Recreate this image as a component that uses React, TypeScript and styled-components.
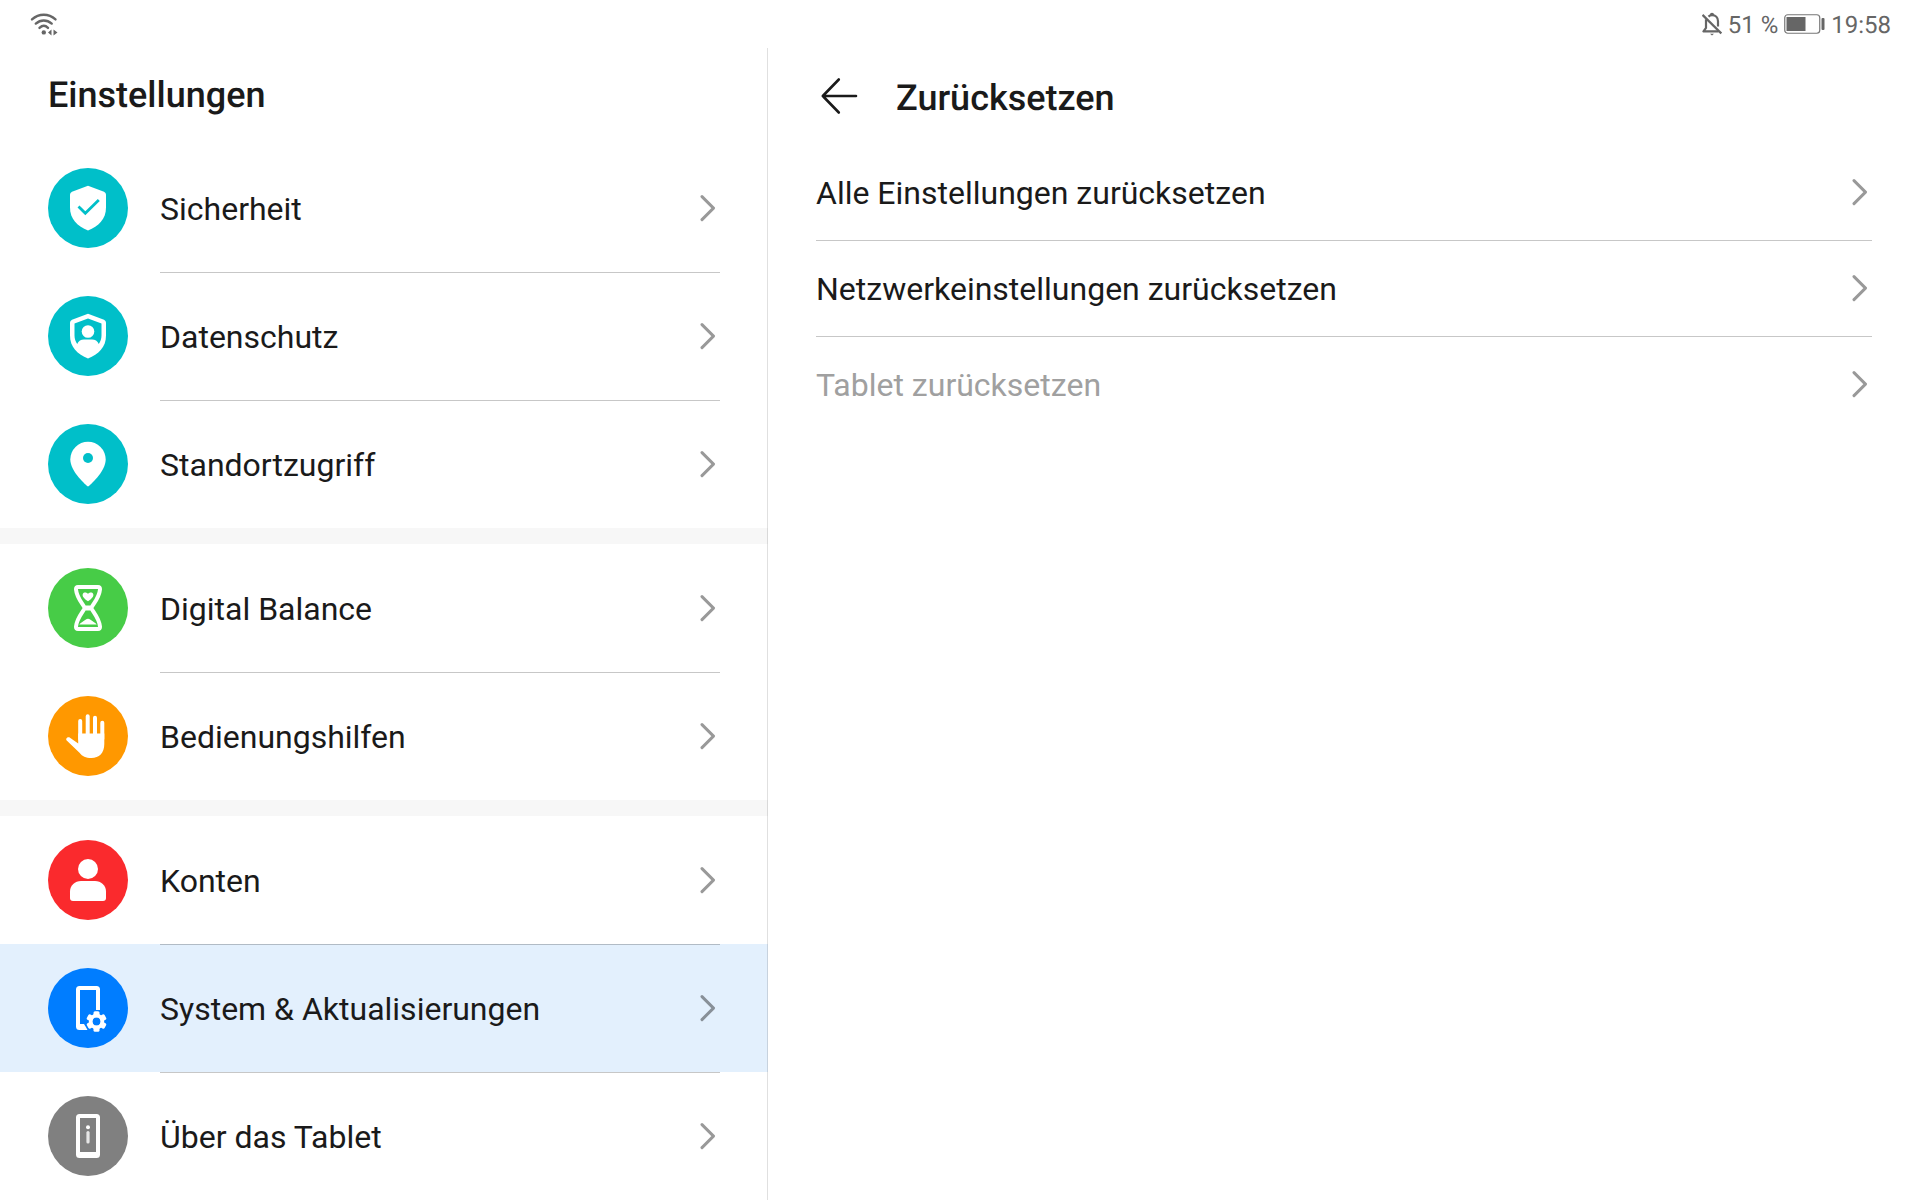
import React from 'react';
import styled, { createGlobalStyle } from 'styled-components';

const GlobalStyle = createGlobalStyle`
  *, *::before, *::after { box-sizing: border-box; }
  body {
    margin: 0;
    background: #ffffff;
    color: #1a1a1a;
    font-family: Roboto, 'Liberation Sans', sans-serif;
    text-rendering: geometricPrecision;
  }
  ul { list-style: none; margin: 0; padding: 0; }
`;

const Screen = styled.div`
  display: flex;
  flex-direction: column;
  min-height: 100vh;
`;

const StatusBar = styled.header`
  display: flex;
  align-items: center;
  justify-content: space-between;
  height: 48px;
  padding: 0 29px;
  color: #666666;
  font-size: 24px;
  line-height: 32px;
`;

const StatusGroup = styled.div`
  display: flex;
  align-items: center;
  gap: 6px;
`;

const StatusText = styled.span`
  padding-top: 2px;
`;

const Panes = styled.div`
  display: flex;
  flex: 1;
`;

const SidePane = styled.aside`
  position: relative;
  width: 40%;

  &::after {
    content: '';
    position: absolute;
    top: 0;
    right: 0;
    bottom: 0;
    width: 1px;
    background: rgba(0, 0, 0, 0.12);
  }
`;

const DetailPane = styled.main`
  flex: 1;
  padding: 0 48px;
`;

const PaneHeader = styled.div<{ $lowered?: boolean }>`
  display: flex;
  align-items: center;
  gap: 36px;
  height: 96px;
  padding: 0 ${(p) => (p.$lowered ? '0' : '48px')};
`;

const Title = styled.h1<{ $lowered?: boolean }>`
  margin: 0;
  padding: ${(p) => (p.$lowered ? '4px 0 0' : '0 0 2px')};
  font-size: 36px;
  line-height: 48px;
  font-weight: 500;
`;

const BackButton = styled.button`
  display: flex;
  padding: 0;
  border: 0;
  background: none;
  color: #1a1a1a;
  cursor: pointer;
`;

const Group = styled.ul`
  & + & { border-top: 16px solid #f7f7f7; }
`;

const EntryButton = styled.button<{ $selected?: boolean }>`
  display: flex;
  align-items: center;
  gap: 32px;
  width: 100%;
  height: 128px;
  padding: 0 48px;
  border: 0;
  background: ${(p) => (p.$selected ? '#e3f0fd' : 'transparent')};
  color: inherit;
  font: inherit;
  text-align: left;
  cursor: pointer;
`;

const Badge = styled.svg`
  flex: none;
  width: 80px;
  height: 80px;
`;

const EntryBody = styled.span<{ $divided: boolean }>`
  display: flex;
  flex: 1;
  align-self: stretch;
  align-items: center;
  justify-content: space-between;
  padding-right: 4px;
  border-top: 1px solid ${(p) => (p.$divided ? 'rgba(0, 0, 0, 0.22)' : 'transparent')};
  font-size: 32px;
  line-height: 40px;
`;

const OptionItem = styled.li`
  border-top: 1px solid transparent;

  & + & { border-top-color: #c7c7c7; }
`;

const OptionButton = styled.button`
  display: flex;
  align-items: center;
  justify-content: space-between;
  width: 100%;
  height: 95px;
  padding: 0 4px 0 0;
  border: 0;
  background: none;
  color: inherit;
  font: inherit;
  font-size: 32px;
  line-height: 40px;
  text-align: left;
  cursor: pointer;

  &:disabled { color: #a0a0a0; cursor: default; }
`;

const Chevron = () => (
  <svg width="16" height="28" viewBox="0 0 16 28" fill="none" stroke="#000" strokeOpacity="0.4" strokeWidth="3" strokeLinecap="round" strokeLinejoin="round" aria-hidden="true">
    <path d="M2 1.600 13.500 13.100 2 24.600" />
  </svg>
);

const WifiIcon = () => (
  <svg width="30" height="24" viewBox="0 0 30 24" fill="none" stroke="#666" strokeWidth="2.4" strokeLinecap="round" role="img" aria-label="WLAN">
    <path d="M3 7.4C10 1.2 19.500 1.200 26.500 7.400" />
    <path d="M6.800 11.600C11.600 7.400 17.900 7.400 22.700 11.600" />
    <path d="M10.500 15.900C13.200 13.400 16.500 13.400 19 15.900" />
    <circle cx="14.800" cy="20.400" r="2.200" fill="#666" stroke="none" />
    <path d="M19 20.500 22.500 17.500V23.500ZM24.500 17.500 28.500 20.500 24.500 23.500Z" fill="#666" stroke="none" />
  </svg>
);

const MutedIcon = () => (
  <svg width="20" height="24" viewBox="0 0 20 24" fill="none" stroke="#666" strokeWidth="2.200" strokeLinejoin="round" role="img" aria-label="Stumm">
    <path d="M4 7.200V15.900L1.500 19.400H16.500" />
    <path d="M6.500 4.600C7.500 3.600 8.500 3.200 10 3.200C13.500 3.200 16 5.600 16 9.200V14.400" />
    <path d="M9 3C9 1.400 11 1.400 11 3" />
    <path d="M0.500 2.900 19.300 21.400" />
    <path d="M8 21.700H12L10 23.600Z" fill="#666" stroke="none" />
  </svg>
);

const BatteryIcon = () => (
  <svg width="41" height="20" viewBox="0 0 41 20" fill="none" role="img" aria-label="Akku">
    <rect x="0.750" y="0.750" width="35" height="18.500" rx="3" stroke="#777" strokeWidth="1.200" />
    <rect x="2.500" y="3" width="19" height="14" fill="#666" />
    <rect x="37.500" y="4" width="3" height="12" rx="1" fill="#666" />
  </svg>
);

const ArrowIcon = () => (
  <svg width="44" height="44" viewBox="0 0 44 44" fill="none" stroke="currentColor" strokeWidth="2.600" strokeLinecap="round" strokeLinejoin="round" aria-hidden="true">
    <path d="M22.800 5.500 6.800 22 22.800 38.500M6.800 22H40" />
  </svg>
);

const shield = 'M40 17.700 56 23.700Q58 24.500 58 26.800V39.500C58 51 50.500 58.500 40 62.500C29.500 58.500 22 51 22 39.500V26.800Q22 24.500 24 23.700Z';

const gear = Array.from({ length: 6 }, (_, i) => i * 60);

const glyphs = {
  security: (
    <>
      <path d={shield} fill="#fff" />
      <path d="M30.500 38.500 37.300 45.300 50.800 32" fill="none" stroke="#00bfc9" strokeWidth="2.800" />
    </>
  ),
  privacy: (
    <>
      <path d={shield} fill="#fff" />
      <path d="M40 22.500 53.500 27.500V39.500C53.500 42.500 52.500 45.500 50.800 48C49.500 44.800 47 43.500 44 43.500H36C33 43.500 30.500 44.800 29.200 48C27.500 45.500 26.500 42.500 26.500 39.500V27.500Z" fill="#00bfc9" />
      <circle cx="40" cy="35.500" r="6.300" fill="#fff" />
    </>
  ),
  location: (
    <>
      <path d="M40 62.500C38.500 61.500 22.300 47.500 22.300 35.400A17.700 17.700 0 0 1 57.700 35.400C57.700 47.500 41.500 61.500 40 62.500Z" fill="#fff" />
      <circle cx="40" cy="34" r="5" fill="#00bfc9" />
    </>
  ),
  balance: (
    <>
      <path d="M30 19H50Q52.200 19 52 21.300C51.300 30 45 36 43.200 40C45 44 51.300 50 52 58.700Q52.200 61 50 61H30Q27.800 61 28 58.700C28.700 50 35 44 36.800 40C35 36 28.700 30 28 21.300Q27.800 19 30 19Z" fill="none" stroke="#fff" strokeWidth="4" strokeLinejoin="round" />
      <path d="M40 33.200C37 31.400 33.800 28.500 34.800 26C35.800 23.800 39 24.400 40 26C41 24.400 44.200 23.800 45.200 26C46.200 28.500 43 31.400 40 33.200Z" fill="#fff" />
      <path d="M31.300 56.500C32.500 54.800 35 53.800 37.500 51.800Q40 49.800 42.500 51.800C45 53.800 47.500 54.800 48.700 56.500Z" fill="#fff" />
      <path d="M37.500 37.500H42.500V42.500H37.500Z" fill="#fff" />
    </>
  ),
  accessibility: (
    <>
      <path d="M32.200 25V43M39.700 20.200V43M47 21.800V43M54.300 26.800V43" fill="none" stroke="#fff" strokeWidth="4" strokeLinecap="round" />
      <path d="M30.200 37.500H56.300V48C56.300 57 51 62 43.500 62C37.500 62 34.500 60.500 31.500 56.800L18.700 44.500C17.300 42.800 19.300 40.600 21.300 41.300L30.200 47.500Z" fill="#fff" />
    </>
  ),
  accounts: (
    <>
      <circle cx="40" cy="29" r="10" fill="#fff" />
      <path d="M33 41H47C53 41 58 45.500 58 51.500V58Q58 61 55 61H25Q22 61 22 58V51.500C22 45.500 27 41 33 41Z" fill="#fff" />
    </>
  ),
  system: (
    <>
      <path d="M31.500 18H48.500Q52 18 52 21.500V42H48V22H32V56H36Q38 59 39.500 62H31.500Q28 62 28 58.500V21.500Q28 18 31.500 18Z" fill="#fff" />
      <g transform="translate(48.500 53.500)">
        {gear.map((angle) => (
          <rect key={angle} x="-3" y="-10.200" width="6" height="6" rx="1.500" fill="#fff" transform={`rotate(${angle})`} />
        ))}
        <circle r="5.800" fill="none" stroke="#fff" strokeWidth="3.800" />
      </g>
    </>
  ),
  about: (
    <>
      <path fillRule="evenodd" d="M31.500 18H48.500Q52 18 52 21.500V58.500Q52 62 48.500 62H31.500Q28 62 28 58.500V21.500Q28 18 31.500 18ZM32 22V56H48V22Z" fill="#fff" />
      <circle cx="40" cy="31.300" r="2" fill="#fff" />
      <path d="M40 36.500V46" stroke="#e6e6e6" strokeWidth="3.200" strokeLinecap="round" />
    </>
  ),
};

type Entry = { label: string; color: string; glyph: keyof typeof glyphs; selected?: boolean };

const groups: Entry[][] = [
  [
    { label: 'Sicherheit', color: '#00bfc9', glyph: 'security' },
    { label: 'Datenschutz', color: '#00bfc9', glyph: 'privacy' },
    { label: 'Standortzugriff', color: '#00bfc9', glyph: 'location' },
  ],
  [
    { label: 'Digital Balance', color: '#47cc47', glyph: 'balance' },
    { label: 'Bedienungshilfen', color: '#ff9800', glyph: 'accessibility' },
  ],
  [
    { label: 'Konten', color: '#fa2a2d', glyph: 'accounts' },
    { label: 'System & Aktualisierungen', color: '#007dff', glyph: 'system', selected: true },
    { label: 'Über das Tablet', color: '#808080', glyph: 'about' },
  ],
];

const options = [
  { label: 'Alle Einstellungen zurücksetzen' },
  { label: 'Netzwerkeinstellungen zurücksetzen' },
  { label: 'Tablet zurücksetzen', disabled: true },
];

export default function App() {
  return (
    <Screen>
      <GlobalStyle />
      <StatusBar>
        <WifiIcon />
        <StatusGroup>
          <MutedIcon />
          <StatusText>51 %</StatusText>
          <BatteryIcon />
          <StatusText as="time">19:58</StatusText>
        </StatusGroup>
      </StatusBar>
      <Panes>
        <SidePane>
          <PaneHeader>
            <Title>Einstellungen</Title>
          </PaneHeader>
          <nav aria-label="Einstellungen">
            {groups.map((entries) => (
              <Group key={entries[0].label}>
                {entries.map((entry, index) => (
                  <li key={entry.label}>
                    <EntryButton type="button" $selected={entry.selected} aria-current={entry.selected ? 'page' : undefined}>
                      <Badge viewBox="0 0 80 80" aria-hidden="true">
                        <circle cx="40" cy="40" r="40" fill={entry.color} />
                        {glyphs[entry.glyph]}
                      </Badge>
                      <EntryBody $divided={index > 0}>
                        {entry.label}
                        <Chevron />
                      </EntryBody>
                    </EntryButton>
                  </li>
                ))}
              </Group>
            ))}
          </nav>
        </SidePane>
        <DetailPane>
          <PaneHeader $lowered>
            <BackButton type="button" aria-label="Zurück">
              <ArrowIcon />
            </BackButton>
            <Title as="h2" $lowered>Zurücksetzen</Title>
          </PaneHeader>
          <ul>
            {options.map((option) => (
              <OptionItem key={option.label}>
                <OptionButton type="button" disabled={option.disabled}>
                  {option.label}
                  <Chevron />
                </OptionButton>
              </OptionItem>
            ))}
          </ul>
        </DetailPane>
      </Panes>
    </Screen>
  );
}
